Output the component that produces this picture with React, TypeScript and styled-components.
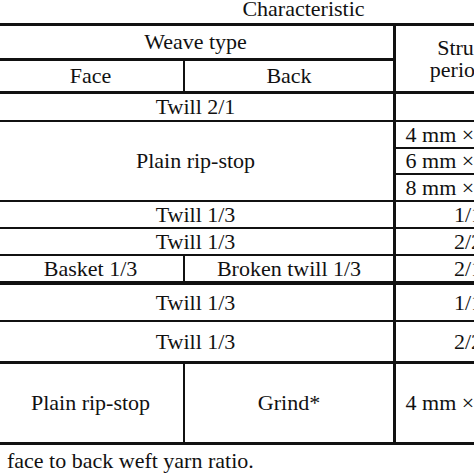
import styled, { createGlobalStyle } from 'styled-components'

const GlobalStyle = createGlobalStyle`
  html, body {
    margin: 0;
    padding: 0;
    background: #ffffff;
    overflow: hidden;
  }
`

const Page = styled.div`
  width: 474px;
  height: 474px;
  overflow: hidden;
  font-family: "Liberation Serif", "Times New Roman", Times, serif;
  font-size: 22px;
  color: #111111;
`

const Sheet = styled.div`
  width: 542px;
  margin-left: -2px;
`

const Caption = styled.div`
  height: 23px;
  line-height: 17px;
  padding-left: 69px;
  text-align: center;
  white-space: nowrap;
`

const Table = styled.div`
  border-top: 3px solid #111;
`

const Row = styled.div<{ $h?: number; $line: number }>`
  display: flex;
  border-bottom: ${({ $line }) => $line}px solid #111;
  ${({ $h }) => ($h ? `height: ${$h}px;` : '')}
`

const Left = styled.div`
  width: 395px;
  display: flex;
  flex-direction: column;
`

const Right = styled.div`
  flex: 1;
  border-left: 3px solid #111;
  display: flex;
  flex-direction: column;
`

const Split = styled.div<{ $h?: number; $line?: number }>`
  display: flex;
  flex: 1;
  ${({ $h }) => ($h ? `height: ${$h}px; flex: none;` : '')}
  border-bottom: ${({ $line = 0 }) => $line}px solid #111;
`

const Cell = styled.div<{ $w?: number; $rule?: number; $shift?: number }>`
  display: flex;
  align-items: center;
  justify-content: center;
  text-align: center;
  white-space: nowrap;
  line-height: 22px;
  ${({ $w }) => ($w ? `width: ${$w}px; flex: none;` : 'flex: 1;')}
  border-right: ${({ $rule = 0 }) => $rule}px solid #111;
  padding-left: ${({ $shift = 0 }) => $shift}px;
`

const Label = styled.span`
  display: block;
  text-align: center;
`

const SubCell = styled.div<{ $h: number; $line?: number }>`
  height: ${({ $h }) => $h}px;
  border-bottom: ${({ $line = 0 }) => $line}px solid #111;
  display: flex;
  align-items: center;
  justify-content: center;
  white-space: nowrap;
  line-height: 22px;
`

const Footer = styled.div`
  padding: 4px 0 0 7px;
  line-height: 24px;
  white-space: nowrap;
`

type Simple = { text: string; value: string; h: number; line: number }

const simpleRows: Simple[] = [
  { text: 'Twill 1/3', value: '1/1', h: 25, line: 2 },
  { text: 'Twill 1/3', value: '2/2', h: 25, line: 2 },
]

const lowerRows: Simple[] = [
  { text: 'Twill 1/3', value: '1/1', h: 35, line: 2 },
  { text: 'Twill 1/3', value: '2/2', h: 39, line: 3 },
]

const SingleRow = ({ text, value, h, line }: Simple) => (
  <Row $h={h} $line={line}>
    <Left>
      <Cell>{text}</Cell>
    </Left>
    <Right>
      <Cell>{value}</Cell>
    </Right>
  </Row>
)

export default function App() {
  return (
    <Page>
      <GlobalStyle />
      <Sheet>
        <Caption>Characteristic</Caption>
        <Table>
          <Row $line={3}>
            <Left>
              <Split $h={32} $line={3}>
                <Cell>Weave type</Cell>
              </Split>
              <Split $h={30}>
                <Cell $w={185} $rule={2}>Face</Cell>
                <Cell>Back</Cell>
              </Split>
            </Left>
            <Right>
              <Cell $shift={19}>
                <Label>
                  Structure
                  <br />
                  periodicity
                </Label>
              </Cell>
            </Right>
          </Row>

          <Row $h={26} $line={2}>
            <Left>
              <Cell>Twill 2/1</Cell>
            </Left>
            <Right>
              <Cell />
            </Right>
          </Row>

          <Row $line={2}>
            <Left>
              <Cell>Plain rip-stop</Cell>
            </Left>
            <Right>
              <SubCell $h={25} $line={2}>4 mm × 4 mm</SubCell>
              <SubCell $h={24} $line={2}>6 mm × 6 mm</SubCell>
              <SubCell $h={25}>8 mm × 8 mm</SubCell>
            </Right>
          </Row>

          {simpleRows.map((r, i) => (
            <SingleRow key={i} {...r} />
          ))}

          <Row $h={25} $line={4}>
            <Left>
              <Split>
                <Cell $w={185} $rule={2}>Basket 1/3</Cell>
                <Cell>Broken twill 1/3</Cell>
              </Split>
            </Left>
            <Right>
              <Cell>2/1</Cell>
            </Right>
          </Row>

          {lowerRows.map((r, i) => (
            <SingleRow key={i} {...r} />
          ))}

          <Row $h={78} $line={3}>
            <Left>
              <Split>
                <Cell $w={185} $rule={2}>Plain rip-stop</Cell>
                <Cell>Grind*</Cell>
              </Split>
            </Left>
            <Right>
              <Cell>4 mm × 4 mm</Cell>
            </Right>
          </Row>
        </Table>
      </Sheet>
      <Footer>face to back weft yarn ratio.</Footer>
    </Page>
  )
}
